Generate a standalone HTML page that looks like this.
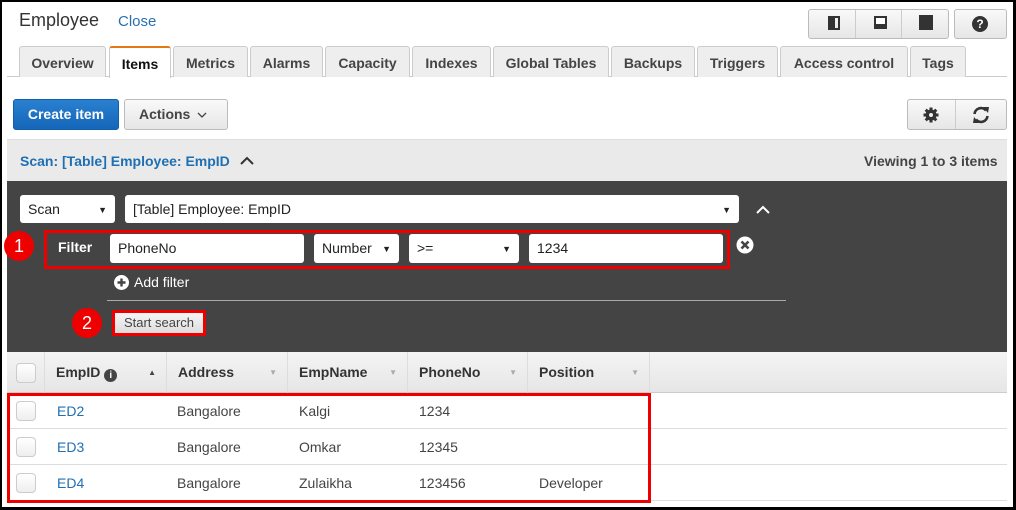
<!DOCTYPE html>
<html><head><style>
*{box-sizing:border-box;margin:0;padding:0}
body{width:1016px;height:510px;overflow:hidden;background:#000;font-family:"Liberation Sans",Arial,sans-serif;position:relative}
#pg{position:absolute;left:2px;top:2px;width:1011px;height:505px;background:#fff;overflow:hidden}
.a{position:absolute}
.tab{position:absolute;top:44px;height:31px;background:#eee;border:1px solid #ccc;border-bottom:none;border-radius:3px 3px 0 0;font-weight:bold;font-size:14px;color:#444;text-align:center;line-height:33px}
.btn{position:absolute;background:linear-gradient(#f9f9f9,#e6e6e6);border:1px solid #bbb;border-radius:3px}
.sel{position:absolute;background:#fff;border-radius:3px;font-size:14px;color:#222;line-height:28px;padding-left:8px}
.sel i{position:absolute;right:8px;top:1px;font-style:normal;font-size:9px}
.th{position:absolute;top:350px;height:41px;font-weight:bold;font-size:14px;color:#333;line-height:41px;border-right:1px solid #ddd;padding-left:11px}
.th i{position:absolute;right:10px;font-style:normal;font-size:8px;color:#aaa}
.td{position:absolute;font-size:14px;color:#444}
.cb{position:absolute;left:14px;width:20px;height:20px;border:1px solid #ccc;border-radius:4px;background:linear-gradient(#fff,#eee)}
.row{position:absolute;left:5px;width:1000px;height:36px;border-bottom:1px solid #ddd}
.circ{position:absolute;width:30px;height:30px;border-radius:50%;background:#e00;color:#fff;font-size:18px;text-align:center;line-height:30px}
</style></head><body><div id="pg">
<div class="a" style="left:17px;top:8px;font-size:18px;color:#333">Employee</div>
<div class="a" style="left:116px;top:11px;font-size:15px;color:#2a6fb0">Close</div>

<div class="btn" style="left:806px;top:7px;width:141px;height:30px"></div>
<div class="a" style="left:853px;top:8px;width:1px;height:28px;background:#ccc"></div>
<div class="a" style="left:899px;top:8px;width:1px;height:28px;background:#ccc"></div>
<div class="a" style="left:826px;top:14px;width:12px;height:14px;border:2px solid #333"><div style="width:5px;height:10px;background:#333"></div></div>
<div class="a" style="left:872px;top:14px;width:13px;height:13px;border:2px solid #333;border-bottom-width:5px;background:#fff"></div>
<div class="a" style="left:917px;top:13px;width:14px;height:15px;background:#333"></div>
<div class="btn" style="left:952px;top:7px;width:53px;height:30px"></div>
<div class="a" style="left:970px;top:14px;width:16px;height:16px;border-radius:50%;background:#333;color:#fff;font-size:12px;font-weight:bold;text-align:center;line-height:16px">?</div>

<div class="a" style="left:5px;top:74px;width:1000px;height:1px;background:#ccc"></div>
<div class="tab" style="left:17px;width:87px">Overview</div>
<div class="tab" style="left:107px;width:62px;background:#fff;border-top:2px solid #e47911;color:#111;height:32px;line-height:33px">Items</div>
<div class="tab" style="left:171px;width:75px">Metrics</div>
<div class="tab" style="left:248px;width:73px">Alarms</div>
<div class="tab" style="left:323px;width:85px">Capacity</div>
<div class="tab" style="left:410px;width:79px">Indexes</div>
<div class="tab" style="left:491px;width:116px">Global Tables</div>
<div class="tab" style="left:609px;width:84px">Backups</div>
<div class="tab" style="left:695px;width:81px">Triggers</div>
<div class="tab" style="left:778px;width:128px">Access control</div>
<div class="tab" style="left:908px;width:56px">Tags</div>

<div class="a" style="left:11px;top:97px;width:106px;height:31px;border-radius:3px;background:linear-gradient(#2a80d0,#1566b8);border:1px solid #1060b0;color:#fff;font-weight:bold;font-size:14px;text-align:center;line-height:29px">Create item</div>
<div class="btn" style="left:122px;top:97px;width:104px;height:31px;font-weight:bold;font-size:14px;color:#444;line-height:29px;padding-left:14px">Actions <svg width="10" height="6" style="margin-left:3px;vertical-align:1px"><path d="M1 1l4 4 4-4" fill="none" stroke="#444" stroke-width="1.3"/></svg></div>
<div class="btn" style="left:905px;top:97px;width:100px;height:31px"></div>
<div class="a" style="left:953px;top:98px;width:1px;height:29px;background:#ccc"></div>
<svg class="a" style="left:921px;top:105px" width="16" height="16" viewBox="0 0 16 16"><g fill="#333"><circle cx="8" cy="8" r="5.5"/><rect x="6.5" y="0.5" width="3" height="15"/><rect x="0.5" y="6.5" width="15" height="3"/><rect x="6.5" y="0.5" width="3" height="15" transform="rotate(45 8 8)"/><rect x="6.5" y="0.5" width="3" height="15" transform="rotate(-45 8 8)"/></g><circle cx="8" cy="8" r="2" fill="#eee"/></svg>
<svg class="a" style="left:969px;top:104px" width="20" height="18" viewBox="0 0 20 18"><path d="M3.5 8A6.5 6.5 0 0 1 15 4.5" fill="none" stroke="#333" stroke-width="2.6"/><path d="M16.5 10A6.5 6.5 0 0 1 5 13.5" fill="none" stroke="#333" stroke-width="2.6"/><path d="M12 1l6 0-1 6z" fill="#333"/><path d="M8 17l-6 0 1-6z" fill="#333"/></svg>

<div class="a" style="left:5px;top:137px;width:1000px;height:42px;background:#eaeaea;border-top:1px solid #ddd"></div>
<div class="a" style="left:18px;top:151px;font-size:14px;font-weight:bold;color:#1f6fb3">Scan: [Table] Employee: EmpID</div>
<svg class="a" style="left:237px;top:154px" width="16" height="10"><path d="M2 8l6-6 6 6" fill="none" stroke="#333" stroke-width="2"/></svg>
<div class="a" style="left:862px;top:151px;font-size:14px;font-weight:bold;color:#444">Viewing 1 to 3 items</div>

<div class="a" style="left:5px;top:179px;width:1000px;height:171px;background:#444"></div>
<div class="sel" style="left:18px;top:193px;width:95px;height:28px">Scan<i>&#9660;</i></div>
<div class="sel" style="left:123px;top:193px;width:614px;height:28px">[Table] Employee: EmpID<i>&#9660;</i></div>
<svg class="a" style="left:753px;top:203px" width="16" height="10"><path d="M2 8l6-6 6 6" fill="none" stroke="#fff" stroke-width="2"/></svg>

<div class="circ" style="left:2px;top:229px">1</div>
<div class="a" style="left:42px;top:228px;width:686px;height:39px;border:3px solid #e00"></div>
<div class="a" style="left:56px;top:237px;color:#fff;font-weight:bold;font-size:14px">Filter</div>
<div class="sel" style="left:108px;top:232px;width:194px;height:29px">PhoneNo</div>
<div class="sel" style="left:312px;top:232px;width:85px;height:29px">Number<i>&#9660;</i></div>
<div class="sel" style="left:407px;top:232px;width:110px;height:29px">&gt;=<i>&#9660;</i></div>
<div class="sel" style="left:527px;top:232px;width:194px;height:29px">1234</div>
<svg class="a" style="left:734px;top:234px" width="18" height="18" viewBox="0 0 18 18"><circle cx="9" cy="9" r="8.5" fill="#fff"/><path d="M5.5 5.5l7 7M12.5 5.5l-7 7" stroke="#444" stroke-width="2.6"/></svg>

<svg class="a" style="left:112px;top:273px" width="15" height="15" viewBox="0 0 15 15"><circle cx="7.5" cy="7.5" r="7.5" fill="#fff"/><path d="M7.5 3.5v8M3.5 7.5h8" stroke="#444" stroke-width="2.4"/></svg>
<div class="a" style="left:132px;top:272px;color:#fff;font-size:14px">Add filter</div>
<div class="a" style="left:105px;top:298px;width:679px;height:1px;background:#aaa"></div>
<div class="circ" style="left:70px;top:306px">2</div>
<div class="a" style="left:110px;top:308px;width:94px;height:26px;border:3px solid #e00;background:linear-gradient(#f6f6f6,#ddd);font-size:13px;color:#444;text-align:center;line-height:20px">Start search</div>

<div class="a" style="left:5px;top:350px;width:1000px;height:41px;background:linear-gradient(#f4f4f4,#e6e6e6);border-bottom:1px solid #ccc"></div>
<div class="th" style="left:5px;width:38px"></div>
<div class="cb" style="top:361px"></div>
<div class="th" style="left:43px;width:122px">EmpID <span style="display:inline-block;width:13px;height:13px;border-radius:50%;background:#444;color:#fff;font-size:10px;text-align:center;line-height:13px;vertical-align:-1px">i</span><i style="color:#444">&#9650;</i></div>
<div class="th" style="left:165px;width:121px">Address<i>&#9660;</i></div>
<div class="th" style="left:286px;width:120px">EmpName<i>&#9660;</i></div>
<div class="th" style="left:406px;width:120px">PhoneNo<i>&#9660;</i></div>
<div class="th" style="left:526px;width:122px">Position<i>&#9660;</i></div>

<div class="row" style="top:391px"></div><div class="row" style="top:427px"></div><div class="row" style="top:463px"></div>
<div class="cb" style="top:399px"></div><div class="cb" style="top:435px"></div><div class="cb" style="top:471px"></div>
<div class="td" style="left:55px;top:401px;color:#1f6fb3">ED2</div><div class="td" style="left:175px;top:401px">Bangalore</div><div class="td" style="left:297px;top:401px">Kalgi</div><div class="td" style="left:417px;top:401px">1234</div>
<div class="td" style="left:55px;top:437px;color:#1f6fb3">ED3</div><div class="td" style="left:175px;top:437px">Bangalore</div><div class="td" style="left:297px;top:437px">Omkar</div><div class="td" style="left:417px;top:437px">12345</div>
<div class="td" style="left:55px;top:473px;color:#1f6fb3">ED4</div><div class="td" style="left:175px;top:473px">Bangalore</div><div class="td" style="left:297px;top:473px">Zulaikha</div><div class="td" style="left:417px;top:473px">123456</div><div class="td" style="left:537px;top:473px">Developer</div>
<div class="a" style="left:5px;top:391px;width:644px;height:110px;border:3px solid #e00"></div>
</div></body></html>
